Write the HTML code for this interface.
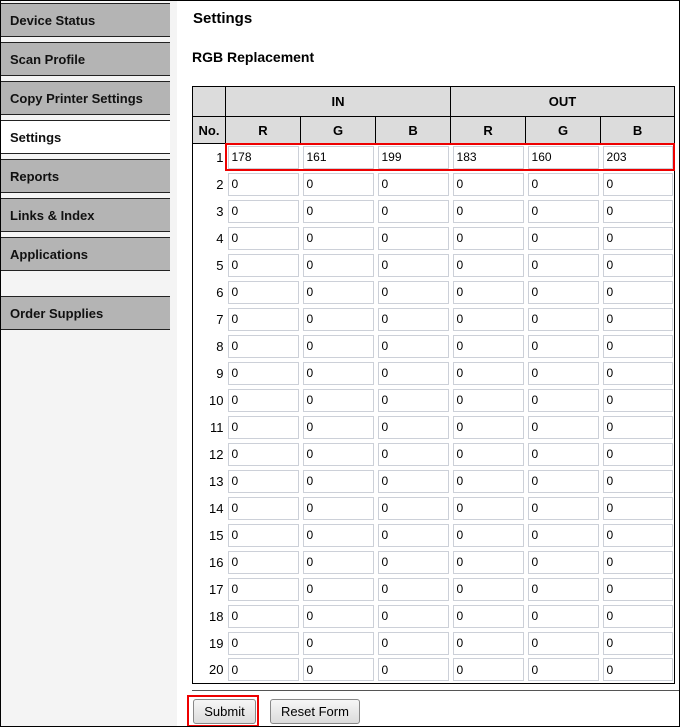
<!DOCTYPE html>
<html><head><style>
*{margin:0;padding:0;box-sizing:border-box}
body{width:680px;height:727px;position:relative;overflow:hidden;background:#fff;font-family:"Liberation Sans",Arial,sans-serif;font-size:12px;color:#000}
.frame{position:absolute;left:0;top:0;width:680px;height:727px;border:1px solid #000;pointer-events:none;z-index:5}
.side{position:absolute;left:0;top:0;width:177px;height:727px;background:#f4f4f4}
.mi{position:absolute;left:0;width:170px;height:34px;background:#b4b4b4;border-top:1px solid #222;border-bottom:1px solid #222;font-weight:bold;font-size:13px;line-height:33px;padding-left:10px;color:#111}
.mi.sel{background:#fff}
h1{position:absolute;left:193px;top:10px;font-size:15px;font-weight:bold}
h2{position:absolute;left:192px;top:49px;font-size:14px;font-weight:bold}
table{position:absolute;left:192px;top:86px;width:482px;border-collapse:collapse;border:1px solid #000;table-layout:fixed}
th{background:#dcdcdc;border:1px solid #000;font-size:13px;font-weight:bold;text-align:center}
tr.h1 th{height:30px}
tr.h2 th{height:27px}
td{height:27px;padding:0}
td.n{text-align:right;padding-right:2px;font-size:13px}
td input{display:block;width:71px;height:23px;margin-left:2px;border:1px solid #ccd0d8;font-family:"Liberation Sans",Arial,sans-serif;font-size:12px;padding-left:3px;background:#fff;color:#000}
td:last-child input{width:70px}
.red{position:absolute;border:2px solid #e00;}
.hr{position:absolute;left:192px;top:690px;width:488px;border-top:1px solid #555}
.btn{position:absolute;top:699px;height:25px;border:1px solid #888;border-radius:3px;background:linear-gradient(#f6f6f6,#dcdcdc);font-size:13px;text-align:center;line-height:23px}
</style></head><body>
<div class="side">
<div class="mi" style="top:3px">Device Status</div>
<div class="mi" style="top:42px">Scan Profile</div>
<div class="mi" style="top:81px">Copy Printer Settings</div>
<div class="mi sel" style="top:120px">Settings</div>
<div class="mi" style="top:159px">Reports</div>
<div class="mi" style="top:198px">Links &amp; Index</div>
<div class="mi" style="top:237px">Applications</div>
<div class="mi" style="top:296px">Order Supplies</div>
</div>
<h1>Settings</h1>
<h2>RGB Replacement</h2>
<table>
<colgroup><col style="width:33px"><col style="width:75px"><col style="width:75px"><col style="width:75px"><col style="width:75px"><col style="width:75px"><col style="width:74px"></colgroup>
<tr class="h1"><th></th><th colspan="3">IN</th><th colspan="3">OUT</th></tr>
<tr class="h2"><th>No.</th><th>R</th><th>G</th><th>B</th><th>R</th><th>G</th><th>B</th></tr>
<tr><td class="n">1</td><td><input value="178"></td><td><input value="161"></td><td><input value="199"></td><td><input value="183"></td><td><input value="160"></td><td><input value="203"></td></tr>
<tr><td class="n">2</td><td><input value="0"></td><td><input value="0"></td><td><input value="0"></td><td><input value="0"></td><td><input value="0"></td><td><input value="0"></td></tr>
<tr><td class="n">3</td><td><input value="0"></td><td><input value="0"></td><td><input value="0"></td><td><input value="0"></td><td><input value="0"></td><td><input value="0"></td></tr>
<tr><td class="n">4</td><td><input value="0"></td><td><input value="0"></td><td><input value="0"></td><td><input value="0"></td><td><input value="0"></td><td><input value="0"></td></tr>
<tr><td class="n">5</td><td><input value="0"></td><td><input value="0"></td><td><input value="0"></td><td><input value="0"></td><td><input value="0"></td><td><input value="0"></td></tr>
<tr><td class="n">6</td><td><input value="0"></td><td><input value="0"></td><td><input value="0"></td><td><input value="0"></td><td><input value="0"></td><td><input value="0"></td></tr>
<tr><td class="n">7</td><td><input value="0"></td><td><input value="0"></td><td><input value="0"></td><td><input value="0"></td><td><input value="0"></td><td><input value="0"></td></tr>
<tr><td class="n">8</td><td><input value="0"></td><td><input value="0"></td><td><input value="0"></td><td><input value="0"></td><td><input value="0"></td><td><input value="0"></td></tr>
<tr><td class="n">9</td><td><input value="0"></td><td><input value="0"></td><td><input value="0"></td><td><input value="0"></td><td><input value="0"></td><td><input value="0"></td></tr>
<tr><td class="n">10</td><td><input value="0"></td><td><input value="0"></td><td><input value="0"></td><td><input value="0"></td><td><input value="0"></td><td><input value="0"></td></tr>
<tr><td class="n">11</td><td><input value="0"></td><td><input value="0"></td><td><input value="0"></td><td><input value="0"></td><td><input value="0"></td><td><input value="0"></td></tr>
<tr><td class="n">12</td><td><input value="0"></td><td><input value="0"></td><td><input value="0"></td><td><input value="0"></td><td><input value="0"></td><td><input value="0"></td></tr>
<tr><td class="n">13</td><td><input value="0"></td><td><input value="0"></td><td><input value="0"></td><td><input value="0"></td><td><input value="0"></td><td><input value="0"></td></tr>
<tr><td class="n">14</td><td><input value="0"></td><td><input value="0"></td><td><input value="0"></td><td><input value="0"></td><td><input value="0"></td><td><input value="0"></td></tr>
<tr><td class="n">15</td><td><input value="0"></td><td><input value="0"></td><td><input value="0"></td><td><input value="0"></td><td><input value="0"></td><td><input value="0"></td></tr>
<tr><td class="n">16</td><td><input value="0"></td><td><input value="0"></td><td><input value="0"></td><td><input value="0"></td><td><input value="0"></td><td><input value="0"></td></tr>
<tr><td class="n">17</td><td><input value="0"></td><td><input value="0"></td><td><input value="0"></td><td><input value="0"></td><td><input value="0"></td><td><input value="0"></td></tr>
<tr><td class="n">18</td><td><input value="0"></td><td><input value="0"></td><td><input value="0"></td><td><input value="0"></td><td><input value="0"></td><td><input value="0"></td></tr>
<tr><td class="n">19</td><td><input value="0"></td><td><input value="0"></td><td><input value="0"></td><td><input value="0"></td><td><input value="0"></td><td><input value="0"></td></tr>
<tr><td class="n">20</td><td><input value="0"></td><td><input value="0"></td><td><input value="0"></td><td><input value="0"></td><td><input value="0"></td><td><input value="0"></td></tr>
</table>
<div class="red" style="left:225px;top:143px;width:450px;height:28px"></div>
<div class="hr"></div>
<div class="btn" style="left:193px;width:63px">Submit</div>
<div class="red" style="left:187px;top:695px;width:72px;height:32px"></div>
<div class="btn" style="left:270px;width:90px">Reset Form</div>
<div class="frame"></div>
</body></html>
